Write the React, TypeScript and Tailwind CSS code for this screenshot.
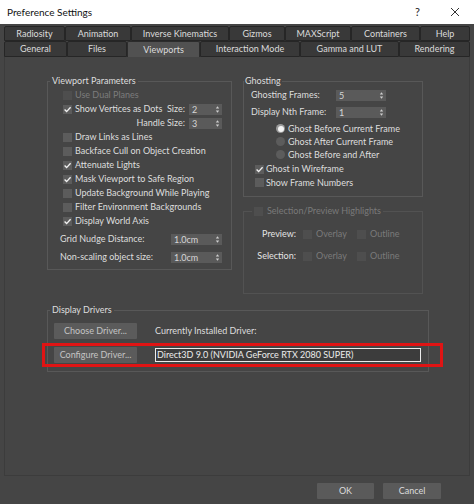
import React from 'react';

const FONT = { fontFamily: 'Lato, "Noto Sans", sans-serif' };

const row1 = [
  { label: 'Radiosity', w: 'w-[61px]' },
  { label: 'Animation', w: 'w-[66px]' },
  { label: 'Inverse Kinematics', w: 'w-[98px]' },
  { label: 'Gizmos', w: 'w-[56px]' },
  { label: 'MAXScript', w: 'w-[66px]' },
  { label: 'Containers', w: 'w-[69px]' },
  { label: 'Help', w: 'w-[50px]' },
];

const row2 = [
  { label: 'General', w: 'w-[63px]' },
  { label: 'Files', w: 'w-[60px]' },
  { label: 'Viewports', w: 'w-[73px]', active: true },
  { label: 'Interaction Mode', w: 'w-[100px]' },
  { label: 'Gamma and LUT', w: 'w-[99px]' },
  { label: 'Rendering', w: 'w-[71px]' },
];

const Check = ({ checked = false, disabled = false }: { checked?: boolean; disabled?: boolean }) => (
  <span
    className={`w-[9px] h-[9px] shrink-0 flex items-center justify-center ${
      disabled ? 'bg-[#4e4e4e]' : 'bg-[#5c5c5c]'
    }`}
  >
    {checked && (
      <svg width="9" height="9" viewBox="0 0 9 9">
        <polyline points="1.6,4.6 3.6,6.6 7.6,2.2" fill="none" stroke="#f0f0f0" strokeWidth="1.4" />
      </svg>
    )}
  </span>
);

const Radio = ({ on = false }: { on?: boolean }) => (
  <span
    className={`w-[9px] h-[9px] shrink-0 rounded-full flex items-center justify-center ${
      on ? 'bg-[#9a9a9a]' : 'bg-[#5c5c5c]'
    }`}
  >
    {on && <span className="w-[6px] h-[6px] rounded-full bg-[#f4f4f4]" />}
  </span>
);

const Spinner = ({ value, w }: { value: string; w: string }) => (
  <div className={`${w} h-[11px] bg-[#5a5a5a] flex items-center justify-between pl-[3px] pr-[2px]`}>
    <span className="text-[9px] leading-[11px] text-[#d6d6d6]">{value}</span>
    <svg width="5" height="9" viewBox="0 0 5 9">
      <polygon points="0.8,3.6 2.5,1.2 4.2,3.6" fill="#cfcfcf" />
      <polygon points="0.8,5.4 4.2,5.4 2.5,7.8" fill="#cfcfcf" />
    </svg>
  </div>
);

const CheckRow = ({ label, checked, disabled }: { label: string; checked?: boolean; disabled?: boolean }) => (
  <div className="h-[14px] flex items-center gap-[3px] pl-[15px]">
    <Check checked={checked} disabled={disabled} />
    <span className={disabled ? 'text-[#7c7c7c]' : 'text-[#dedede]'}>{label}</span>
  </div>
);

export default function App() {
  return (
    <div style={FONT} className="relative w-[474px] h-[504px] bg-[#454545] flex flex-col text-[9px] leading-[14px] overflow-hidden whitespace-nowrap">
      {/* title bar */}
      <div className="h-[24px] bg-white flex items-center pl-[7px] pr-[14px] shrink-0">
        <span className="text-[10px] text-[#111]">Preference Settings</span>
        <span className="ml-auto text-[11px] text-[#222] mr-[30px]">?</span>
        <svg width="10" height="10" viewBox="0 0 10 10">
          <path d="M1 1 L9 9 M9 1 L1 9" stroke="#333" strokeWidth="1" />
        </svg>
      </div>

      {/* tabs */}
      <div className="pt-[2px] pl-[4px] flex flex-col shrink-0">
        <div className="flex h-[15px]">
          {row1.map((t) => (
            <div
              key={t.label}
              className={`${t.w} h-full bg-[#393939] border border-[#262626] rounded-t-[2px] flex items-center justify-center text-[#dcdcdc]`}
            >
              {t.label}
            </div>
          ))}
        </div>
        <div className="flex h-[16px]">
          {row2.map((t) => (
            <div
              key={t.label}
              className={`${t.w} h-full flex items-center justify-center text-[#dcdcdc] rounded-t-[2px] ${
                t.active
                  ? 'bg-[#515151] border border-b-0 border-[#2c2c2c]'
                  : 'bg-[#393939] border border-[#262626]'
              }`}
            >
              {t.label}
            </div>
          ))}
        </div>
      </div>

      {/* tab panel */}
      <div className="ml-[4px] w-[466px] h-[419px] border border-t-0 border-[#3c3c3c] shrink-0 pt-[17px] pl-[42px] flex flex-col">
        <div className="flex items-start gap-[11px]">
          {/* viewport parameters */}
          <fieldset className="w-[185px] h-[196px] border border-[#585858]">
            <legend className="ml-[2px] px-[2px] text-[#dedede]">Viewport Parameters</legend>
            <div className="flex flex-col">
              <CheckRow label="Use Dual Planes" disabled />
              <div className="h-[14px] flex items-center pr-[9px]">
                <div className="flex items-center gap-[3px] pl-[15px]">
                  <Check checked />
                  <span className="text-[#dedede]">Show Vertices as Dots</span>
                </div>
                <span className="ml-auto mr-[4px] text-[#dedede]">Size:</span>
                <Spinner value="2" w="w-[33px]" />
              </div>
              <div className="h-[14px] flex items-center justify-end pr-[9px]">
                <span className="mr-[4px] text-[#dedede]">Handle Size:</span>
                <Spinner value="3" w="w-[33px]" />
              </div>
              <CheckRow label="Draw Links as Lines" />
              <CheckRow label="Backface Cull on Object Creation" />
              <CheckRow label="Attenuate Lights" checked />
              <CheckRow label="Mask Viewport to Safe Region" checked />
              <CheckRow label="Update Background While Playing" />
              <CheckRow label="Filter Environment Backgrounds" />
              <CheckRow label="Display World Axis" checked />
              <div className="mt-[3px] h-[16px] flex items-center pl-[12px] pr-[9px]">
                <span className="text-[#dedede]">Grid Nudge Distance:</span>
                <Spinner value="1.0cm" w="w-[51px] ml-auto" />
              </div>
              <div className="mt-[2px] h-[16px] flex items-center pl-[12px] pr-[9px]">
                <span className="text-[#dedede]">Non-scaling object size:</span>
                <Spinner value="1.0cm" w="w-[51px] ml-auto" />
              </div>
            </div>
          </fieldset>

          {/* right column */}
          <div className="w-[180px] flex flex-col">
            <fieldset className="h-[123px] border border-[#585858]">
              <legend className="px-[1px] text-[#dedede]">Ghosting</legend>
              <div className="flex flex-col pl-[7px]">
                <div className="h-[14px] flex items-center">
                  <span className="w-[85px] text-[#dedede]">Ghosting Frames:</span>
                  <Spinner value="5" w="w-[50px]" />
                </div>
                <div className="mt-[3px] h-[14px] flex items-center">
                  <span className="w-[85px] text-[#dedede]">Display Nth Frame:</span>
                  <Spinner value="1" w="w-[50px]" />
                </div>
                <div className="mt-[3px] flex flex-col pl-[25px]">
                  {['Ghost Before Current Frame', 'Ghost After Current Frame', 'Ghost Before and After'].map((r, i) => (
                    <div key={r} className="h-[13px] flex items-center gap-[3px]">
                      <Radio on={i === 0} />
                      <span className="text-[#dedede]">{r}</span>
                    </div>
                  ))}
                </div>
                <div className="mt-[1px] flex flex-col pl-[4px]">
                  <div className="h-[14px] flex items-center gap-[2px]">
                    <Check checked />
                    <span className="text-[#dedede]">Ghost in Wireframe</span>
                  </div>
                  <div className="h-[13px] flex items-center gap-[2px]">
                    <Check />
                    <span className="text-[#dedede]">Show Frame Numbers</span>
                  </div>
                </div>
              </div>
            </fieldset>

            <fieldset className="mt-[7px] h-[90px] border border-[#525252]">
              <legend className="ml-[8px] px-[2px]">
                <span className="flex items-center gap-[4px]">
                  <Check disabled />
                  <span className="text-[#7a7a7a]">Selection/Preview Highlights</span>
                </span>
              </legend>
              <div className="flex flex-col">
                {['Preview:', 'Selection:'].map((l, i) => (
                  <div key={l} className={`h-[14px] flex items-center ${i === 0 ? 'mt-[9px]' : 'mt-[8px]'}`}>
                    <span className="w-[52px] text-right text-[#e4e4e4]">{l}</span>
                    <span className="ml-[7px]">
                      <Check disabled />
                    </span>
                    <span className="ml-[4px] w-[41px] text-[#7a7a7a]">Overlay</span>
                    <Check disabled />
                    <span className="ml-[4px] text-[#7a7a7a]">Outline</span>
                  </div>
                ))}
              </div>
            </fieldset>
          </div>
        </div>

        {/* display drivers */}
        <fieldset className="mt-[9px] w-[382px] h-[69px] border border-[#585858]">
          <legend className="ml-[2px] px-[2px] text-[#dedede]">Display Drivers</legend>
          <div className="flex flex-col pl-[6px]">
            <div className="mt-[6px] h-[16px] flex items-center">
              <div className="w-[83px] h-[16px] bg-[#5b5b5b] rounded-[1px] flex items-center justify-center text-[#c4c4c4]">
                Choose Driver...
              </div>
              <span className="ml-[18px] text-[#dedede]">Currently Installed Driver:</span>
            </div>
            <div className="mt-[8px] h-[16px] flex items-center">
              <div className="w-[83px] h-[16px] bg-[#5b5b5b] rounded-[1px] flex items-center justify-center text-[#c4c4c4]">
                Configure Driver...
              </div>
              <div className="ml-[18px] w-[266px] h-[14px] border border-[#ececec] bg-[#3c3c3c] flex items-center pl-[1px] text-[#ececec] leading-[12px]">
                Direct3D 9.0 (NVIDIA GeForce RTX 2080 SUPER)
              </div>
            </div>
          </div>
        </fieldset>
      </div>

      {/* dialog buttons */}
      <div className="mt-[7px] flex justify-end gap-[9px] pr-[33px]">
        <div className="w-[57px] h-[16px] bg-[#5a5a5a] rounded-[1px] flex items-center justify-center text-[#dcdcdc]">OK</div>
        <div className="w-[58px] h-[16px] bg-[#5a5a5a] rounded-[1px] flex items-center justify-center text-[#dcdcdc]">Cancel</div>
      </div>

      {/* red annotation frame */}
      <div className="absolute left-[42px] top-[343px] w-[401px] h-[24px] border-[3px] border-[#e01414] pointer-events-none" />
    </div>
  );
}
